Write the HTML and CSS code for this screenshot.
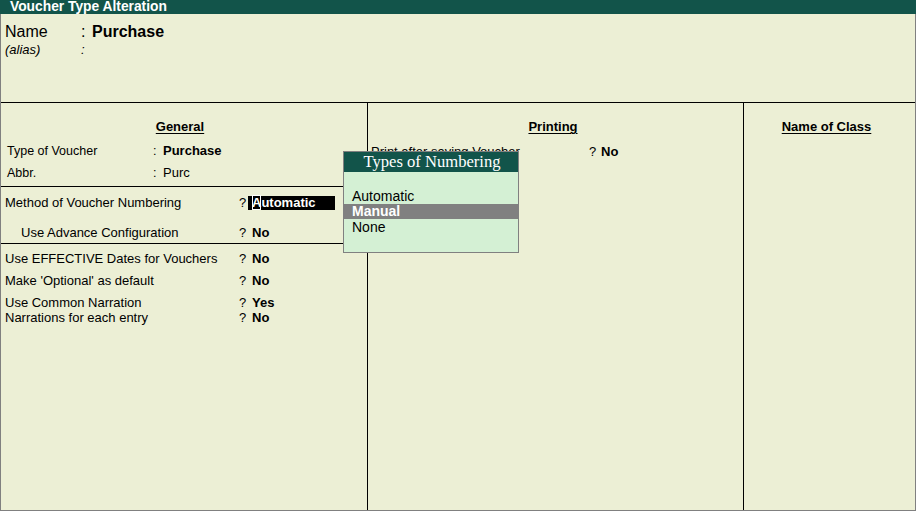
FILE: index.html
```html
<!DOCTYPE html>
<html>
<head>
<meta charset="utf-8">
<link rel="stylesheet" href="styles.css">
</head>
<body>
<div class="window">
  <div class="titlebar">Voucher Type Alteration</div>
  <div class="main">
    <div class="header">
      <div class="name-row"><span class="nm-label">Name</span><span class="nm-colon">:</span><span class="nm-value">Purchase</span></div>
      <div class="alias-row"><span class="al-label">(alias)</span><span class="al-colon">:</span></div>
    </div>
    <div class="columns">
      <div class="col col-general">
        <div class="heading"><span>General</span></div>
        <div class="info-row first"><span class="info-label">Type of Voucher</span><span class="info-colon">:</span><span class="info-value bold">Purchase</span></div>
        <div class="info-row"><span class="info-label">Abbr.</span><span class="info-colon">:</span><span class="info-value">Purc</span></div>
        <div class="divider d1"></div>
        <div class="q-row r-method"><span class="q-label">Method of Voucher Numbering</span><span class="q-mark">?</span><span class="q-value"><span class="sel"><span class="cursor">A</span>utomatic</span></span></div>
        <div class="q-row r-advance"><span class="q-label indent">Use Advance Configuration</span><span class="q-mark">?</span><span class="q-value">No</span></div>
        <div class="divider d2"></div>
        <div class="q-row r-eff"><span class="q-label">Use EFFECTIVE Dates for Vouchers</span><span class="q-mark">?</span><span class="q-value">No</span></div>
        <div class="q-row r-opt"><span class="q-label">Make 'Optional' as default</span><span class="q-mark">?</span><span class="q-value">No</span></div>
        <div class="q-row r-common"><span class="q-label">Use Common Narration</span><span class="q-mark">?</span><span class="q-value">Yes</span></div>
        <div class="q-row r-narr"><span class="q-label">Narrations for each entry</span><span class="q-mark">?</span><span class="q-value">No</span></div>
      </div>
      <div class="col col-printing">
        <div class="heading"><span>Printing</span></div>
        <div class="print-row"><span class="p-label">Print after saving Voucher</span><span class="q-mark">?</span><span class="p-value">No</span></div>
      </div>
      <div class="col col-class">
        <div class="heading"><span>Name of Class</span></div>
      </div>
    </div>
  </div>
  <div class="popup">
    <div class="popup-title">Types of Numbering</div>
    <div class="popup-list">
      <div class="popup-item">Automatic</div>
      <div class="popup-item active">Manual</div>
      <div class="popup-item">None</div>
    </div>
  </div>
</div>
</body>
</html>
```
FILE: styles.css
```css
html, body {
  margin: 0;
  padding: 0;
  background: #ecefd5;
}
body {
  font-family: "Liberation Sans", Arial, sans-serif;
  color: #000;
}
.window {
  position: relative;
  width: 916px;
  height: 511px;
  display: flex;
  flex-direction: column;
  background: #ecefd5;
}
.titlebar {
  height: 14px;
  line-height: 14px;
  background: #12544a;
  color: #fff;
  font-weight: bold;
  font-size: 13.8px;
  padding-left: 10px;
  white-space: nowrap;
  overflow: hidden;
}
.main {
  flex: 1;
  display: flex;
  flex-direction: column;
  border-left: 1px solid #808080;
  border-right: 1px solid #808080;
  border-bottom: 1px solid #808080;
}
.header {
  height: 88px;
  padding-left: 4px;
  box-sizing: border-box;
  padding-top: 9px;
}
.name-row {
  display: flex;
  height: 18px;
  line-height: 18px;
  font-size: 16px;
}
.nm-label { width: 76px; }
.nm-colon { width: 11px; }
.nm-value { font-weight: bold; }
.alias-row {
  display: flex;
  height: 16px;
  line-height: 16px;
  font-size: 13px;
  font-style: italic;
  margin-top: 1px;
}
.al-label { width: 76px; }
.columns {
  flex: 1;
  display: grid;
  grid-template-columns: 367px 376px 1fr;
  border-top: 1px solid #000;
}
.col {
  position: relative;
}
.col-general, .col-printing {
  border-right: 1px solid #000;
}
.heading {
  text-align: center;
  font-weight: bold;
  font-size: 13px;
  height: 16px;
  line-height: 16px;
  margin-top: 16px;
}
.heading span {
  text-decoration: underline;
  text-underline-offset: 2px;
}
.col-general .heading { padding-right: 8px; }
.col-printing .heading { margin-left: -5px; }
.col-class .heading { margin-left: -6px; }
.info-row {
  display: flex;
  height: 22px;
  line-height: 22px;
  font-size: 12.5px;
  padding-left: 6px;
}
.info-row.first { margin-top: 5px; }
.info-label { width: 146px; }
.info-colon { width: 10px; }
.info-value { font-size: 13px; }
.bold { font-weight: bold; }
.divider {
  border-top: 1px solid #000;
  height: 0;
}
.d1 { margin-top: 2px; }
.d2 { margin-top: 2px; }
.q-row {
  display: flex;
  height: 16px;
  line-height: 16px;
  font-size: 13px;
  padding-left: 4px;
}
.q-label { width: 234px; white-space: nowrap; }
.q-label.indent { padding-left: 16px; box-sizing: border-box; }
.q-mark { width: 9px; }
.q-value { font-weight: bold; padding-left: 4px; }
.r-method { margin-top: 8px; }
.r-method .q-value { padding-left: 0; }
.sel {
  display: inline-block;
  width: 87px;
  height: 14px;
  line-height: 14px;
  margin-top: 0;
  background: #000;
  color: #fff;
  padding-left: 4px;
  box-sizing: border-box;
}
.cursor {
  outline: 1px solid #fff;
  outline-offset: -1px;
}
.r-advance { margin-top: 14px; }
.r-eff { margin-top: 7px; }
.r-opt { margin-top: 6px; }
.r-common { margin-top: 6px; height: 15px; line-height: 15px; }
.r-narr { height: 15px; line-height: 15px; }
.print-row {
  display: flex;
  height: 22px;
  line-height: 22px;
  font-size: 13px;
  padding-left: 3px;
  margin-top: 6px;
}
.p-label { width: 218px; white-space: nowrap; }
.p-value { font-weight: bold; padding-left: 3px; }
.popup {
  position: absolute;
  left: 343px;
  top: 151px;
  width: 176px;
  height: 102px;
  box-sizing: border-box;
  border: 1px solid #808080;
  background: #d4f0d4;
}
.popup-title {
  height: 20px;
  line-height: 20px;
  background: #12544a;
  color: #fff;
  font-family: "Liberation Serif", "Times New Roman", serif;
  font-size: 16.6px;
  text-align: center;
  padding-left: 2px;
}
.popup-list {
  padding-top: 16px;
}
.popup-item {
  height: 16px;
  line-height: 16px;
  font-size: 14px;
  padding-left: 8px;
}
.popup-item.active {
  background: #808080;
  color: #fff;
  font-weight: bold;
  height: 15px;
  line-height: 15px;
}
```
